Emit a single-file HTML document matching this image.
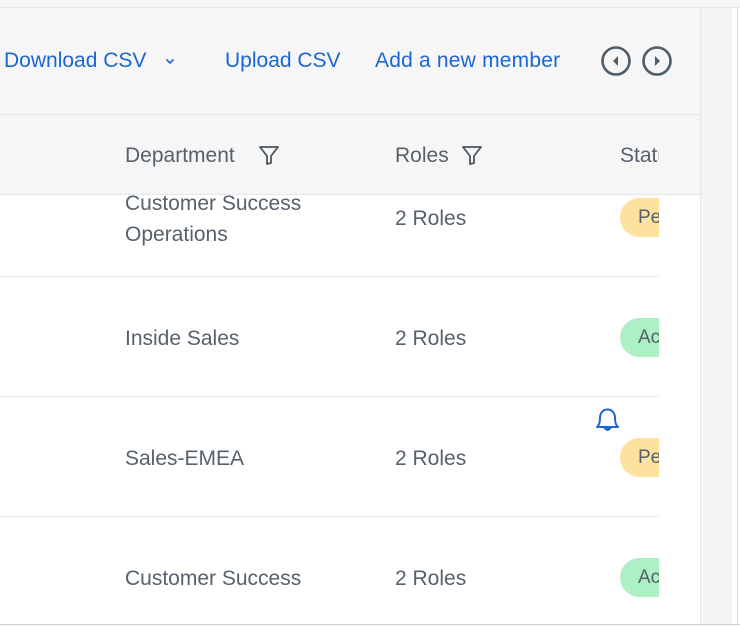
<!DOCTYPE html>
<html><head><style>
body{margin:0;width:740px;height:626px;overflow:hidden;background:#fff;font-family:"Liberation Sans",sans-serif;position:relative}
.a{position:absolute;white-space:nowrap}
.b{color:#1a66d6;font-size:21px}
.g{color:#56616b;font-size:21px}
.pill{position:absolute;left:620px;width:39px;height:39px;border-radius:20px 0 0 20px;overflow:hidden;font-size:19px;color:#56616b;line-height:39px;padding-left:18px;box-sizing:border-box}
.sep{position:absolute;left:0;width:659px;height:1px;background:#e8e8e8}
</style></head><body>
<div class="a" style="left:0;top:0;width:740px;height:7px;background:#f7f7f7;border-bottom:1px solid #e6e6e6"></div>
<div class="a" style="left:0;top:8px;width:700px;height:106px;background:#f6f6f6;border-bottom:1px solid #e6e6e6"></div>
<div class="a" style="left:0;top:115px;width:700px;height:79px;background:#f6f6f6;border-bottom:1px solid #e6e6e6"></div>
<div class="a" style="left:700px;top:8px;width:31px;height:616px;background:#f4f4f4;border-left:1px solid #e6e6e6"></div>
<div class="a" style="left:737px;top:8px;width:1px;height:616px;background:#d8d8d8"></div>
<div class="a" style="left:0;top:624px;width:740px;height:1px;background:#cfcfcf"></div>

<div class="a b" style="left:4px;top:49px">Download CSV</div>
<svg class="a" style="left:164px;top:56px" width="12" height="10"><path d="M2.5 3.5 L6 7 L9.5 3.5" fill="none" stroke="#1a66d6" stroke-width="1.6"/></svg>
<div class="a b" style="left:225px;top:49px">Upload CSV</div>
<div class="a b" style="left:375px;top:49px;letter-spacing:0.2px">Add a new member</div>
<svg class="a" style="left:600px;top:45px" width="75" height="32">
<circle cx="16" cy="16" r="13.5" fill="none" stroke="#505c66" stroke-width="2.6"/>
<path d="M18 11 L13 16 L18 21Z" fill="#505c66"/>
<circle cx="57" cy="16" r="13.5" fill="none" stroke="#505c66" stroke-width="2.6"/>
<path d="M55 11 L60 16 L55 21Z" fill="#505c66"/>
</svg>

<div class="a g" style="left:125px;top:144px">Department</div>
<svg class="a" style="left:258px;top:144px" width="22" height="22"><path d="M2 3 H20 L13 12 V19 L9 20 V12Z" fill="none" stroke="#4a555e" stroke-width="1.8" stroke-linejoin="round"/></svg>
<div class="a g" style="left:395px;top:144px">Roles</div>
<svg class="a" style="left:461px;top:144px" width="22" height="22"><path d="M2 3 H20 L13 12 V19 L9 20 V12Z" fill="none" stroke="#4a555e" stroke-width="1.8" stroke-linejoin="round"/></svg>
<div class="a g" style="left:620px;top:144px;width:39px;overflow:hidden">Status</div>

<div class="a g" style="left:125px;top:188px;line-height:31px;clip-path:inset(7px 0 0 0)">Customer Success<br>Operations</div>
<div class="a g" style="left:395px;top:207px">2 Roles</div>
<div class="pill" style="top:198px;background:#fde29f">Pending</div>
<div class="sep" style="top:276px"></div>

<div class="a g" style="left:125px;top:327px">Inside Sales</div>
<div class="a g" style="left:395px;top:327px">2 Roles</div>
<div class="pill" style="top:318px;background:#aef0c6">Active</div>
<div class="sep" style="top:396px"></div>

<svg class="a" style="left:595px;top:407px" width="25" height="26"><path d="M2 20 C4.5 18 5 15 5 11 C5 6 8 2.5 12.5 2.5 C17 2.5 20 6 20 11 C20 15 20.5 18 23 20 Z" fill="none" stroke="#1a66d6" stroke-width="2" stroke-linejoin="round"/><path d="M9.5 21.5 Q12.5 25 15.5 21.5Z" fill="#1a66d6" stroke="#1a66d6" stroke-width="1.2"/></svg>
<div class="a g" style="left:125px;top:447px">Sales-EMEA</div>
<div class="a g" style="left:395px;top:447px">2 Roles</div>
<div class="pill" style="top:438px;background:#fde29f">Pending</div>
<div class="sep" style="top:516px"></div>

<div class="a g" style="left:125px;top:567px">Customer Success</div>
<div class="a g" style="left:395px;top:567px">2 Roles</div>
<div class="pill" style="top:558px;background:#aef0c6">Active</div>
</body></html>
